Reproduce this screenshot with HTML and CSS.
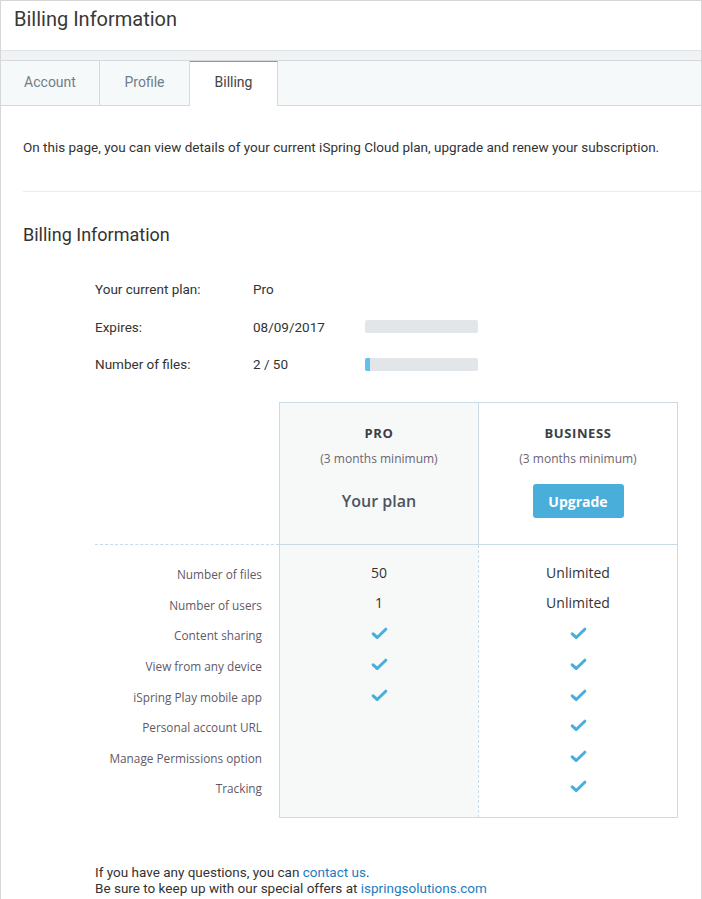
FILE: index.html
```html
<!DOCTYPE html>
<html lang="en">
<head>
<meta charset="utf-8">
<title>Billing Information</title>
<link rel="stylesheet" href="styles.css">
</head>
<body>
<div class="frame">
  <header class="page-head">
    <h1 class="page-title">Billing Information</h1>
  </header>
  <div class="band"></div>
  <nav class="tabs">
    <a class="tab tab-account">Account</a>
    <a class="tab tab-profile">Profile</a>
    <a class="tab tab-billing active">Billing</a>
  </nav>
  <main class="content">
    <p class="intro">On this page, you can view details of your current iSpring Cloud plan, upgrade and renew your subscription.</p>
    <hr class="sep">
    <h2 class="section-title">Billing Information</h2>
    <div class="info">
      <div class="info-row">
        <span class="info-label">Your current plan:</span>
        <span class="info-value">Pro</span>
      </div>
      <div class="info-row">
        <span class="info-label">Expires:</span>
        <span class="info-value">08/09/2017</span>
        <span class="bar"></span>
      </div>
      <div class="info-row">
        <span class="info-label">Number of files:</span>
        <span class="info-value">2 / 50</span>
        <span class="bar"><span class="bar-fill" style="width:4%"></span></span>
      </div>
    </div>

    <div class="plans">
      <div class="head-spacer"></div>
      <div class="plan-head pro">
        <div class="plan-name">PRO</div>
        <div class="plan-min">(3 months minimum)</div>
        <div class="plan-action"><span class="your-plan">Your plan</span></div>
      </div>
      <div class="plan-head business">
        <div class="plan-name">BUSINESS</div>
        <div class="plan-min">(3 months minimum)</div>
        <div class="plan-action"><button class="upgrade">Upgrade</button></div>
      </div>

      <div class="col labels">
        <div class="cell">Number of files</div>
        <div class="cell">Number of users</div>
        <div class="cell">Content sharing</div>
        <div class="cell">View from any device</div>
        <div class="cell">iSpring Play mobile app</div>
        <div class="cell">Personal account URL</div>
        <div class="cell">Manage Permissions option</div>
        <div class="cell">Tracking</div>
      </div>
      <div class="col vals pro">
        <div class="cell num">50</div>
        <div class="cell num">1</div>
        <div class="cell"><svg class="check" viewBox="0 0 18 14"><path d="M2.2 7.4 L6.6 11.3 L15.8 2.4"/></svg></div>
        <div class="cell"><svg class="check" viewBox="0 0 18 14"><path d="M2.2 7.4 L6.6 11.3 L15.8 2.4"/></svg></div>
        <div class="cell"><svg class="check" viewBox="0 0 18 14"><path d="M2.2 7.4 L6.6 11.3 L15.8 2.4"/></svg></div>
        <div class="cell"></div>
        <div class="cell"></div>
        <div class="cell"></div>
      </div>
      <div class="col vals business">
        <div class="cell num">Unlimited</div>
        <div class="cell num">Unlimited</div>
        <div class="cell"><svg class="check" viewBox="0 0 18 14"><path d="M2.2 7.4 L6.6 11.3 L15.8 2.4"/></svg></div>
        <div class="cell"><svg class="check" viewBox="0 0 18 14"><path d="M2.2 7.4 L6.6 11.3 L15.8 2.4"/></svg></div>
        <div class="cell"><svg class="check" viewBox="0 0 18 14"><path d="M2.2 7.4 L6.6 11.3 L15.8 2.4"/></svg></div>
        <div class="cell"><svg class="check" viewBox="0 0 18 14"><path d="M2.2 7.4 L6.6 11.3 L15.8 2.4"/></svg></div>
        <div class="cell"><svg class="check" viewBox="0 0 18 14"><path d="M2.2 7.4 L6.6 11.3 L15.8 2.4"/></svg></div>
        <div class="cell"><svg class="check" viewBox="0 0 18 14"><path d="M2.2 7.4 L6.6 11.3 L15.8 2.4"/></svg></div>
      </div>
    </div>

    <p class="footer-note">If you have any questions, you can <a class="link">contact us</a>.<br>Be sure to keep up with our special offers at <a class="link">ispringsolutions.com</a></p>
  </main>
</div>
</body>
</html>
```
FILE: styles.css
```css
* { box-sizing: border-box; }
html, body { margin: 0; padding: 0; background: #fff; }
body {
  font-family: Roboto, "Liberation Sans", Arial, sans-serif;
  color: #333;
}
.frame {
  width: 702px;
  min-height: 899px;
  border: 1px solid #d6d6d6;
  border-bottom: none;
}
.page-head {
  height: 50px;
  padding: 6px 0 0 13px;
  border-bottom: 1px solid #e1e3e5;
}
.page-title {
  margin: 0;
  font-size: 20px;
  line-height: 24px;
  font-weight: 400;
  color: #383838;
}
.band {
  height: 10px;
  background: #f0f3f5;
  border-bottom: 1px solid #d6d9dc;
}
.tabs {
  display: flex;
  height: 45px;
  background: #f6f9fa;
  border-bottom: 1px solid #d6d9dc;
}
.tab {
  display: flex;
  align-items: center;
  justify-content: center;
  font-size: 14px;
  color: #707d8a;
  border-right: 1px solid #d6d9dc;
  padding-bottom: 3px;
}
.tab-account { width: 99px; }
.tab-profile { width: 90px; }
.tab-billing { width: 88px; }
.tab.active {
  background: #fff;
  color: #444;
  border-top: 1px solid #4aaedb;
  padding-bottom: 4px;
  margin-bottom: -1px;
  height: 45px;
}
.content {
  padding-left: 22px;
}
.intro {
  margin: 0;
  padding-top: 32px;
  font-size: 13.5px;
  line-height: 18px;
  color: #333;
}
.sep {
  margin: 35px 0 0 0;
  border: none;
  border-top: 1px solid #e9ebed;
  height: 0;
}
.section-title {
  margin: 32px 0 0 0;
  font-size: 18px;
  line-height: 22px;
  font-weight: 400;
  color: #333;
}
.info {
  margin: 34px 0 0 72px;
  display: flex;
  flex-direction: column;
  gap: 19.5px;
}
.info-row {
  display: flex;
  align-items: center;
  height: 18px;
  font-size: 13.5px;
  color: #333;
}
.info-label { width: 158px; }
.info-value { width: 112px; }
.bar {
  width: 113px;
  height: 13px;
  background: #e3e6e9;
  border-radius: 2px;
  overflow: hidden;
  display: flex;
}
.bar-fill {
  height: 100%;
  background: #62c0ec;
}

/* plans table */
.plans {
  margin: 29px 0 0 72px;
  display: grid;
  grid-template-columns: 184px 199px 200px;
  font-family: "Open Sans", "Noto Sans", sans-serif;
}
.head-spacer {
  border-bottom: 1px dashed #c8dbe7;
}
.plan-head {
  height: 143px;
  border-top: 1px solid #c8dbe7;
  border-bottom: 1px solid #c8dbe7;
  text-align: center;
  padding-top: 21px;
}
.plan-head.pro {
  background: #f7f9f9;
  border-left: 1px solid #c8dbe7;
}
.plan-head.business {
  border-left: 1px solid #c8dbe7;
  border-right: 1px solid #c8dbe7;
}
.plan-name {
  font-size: 13px;
  line-height: 18px;
  font-weight: 700;
  color: #3a3f47;
  letter-spacing: 0.6px;
}
.plan-min {
  margin-top: 9px;
  font-size: 12px;
  line-height: 16px;
  color: #6c6470;
}
.plan-action {
  margin-top: 17px;
  height: 34px;
  display: flex;
  align-items: center;
  justify-content: center;
}
.your-plan {
  font-size: 16px;
  font-weight: 600;
  color: #4d5560;
}
.upgrade {
  width: 91px;
  height: 34px;
  border: none;
  border-radius: 3px;
  background: #4aaedb;
  color: #fff;
  font-family: "Open Sans", "Noto Sans", sans-serif;
  font-size: 14px;
  font-weight: 700;
  padding: 0;
}
.col {
  display: flex;
  flex-direction: column;
  padding: 14px 0 13px 0;
}
.cell {
  height: 30.6px;
  display: flex;
  align-items: center;
  justify-content: center;
}
.labels .cell {
  justify-content: flex-end;
  padding-right: 17px;
  font-size: 11.8px;
  color: #5f5a66;
}
.vals.pro {
  background: #f7f9f9;
  border-left: 1px solid #c8dbe7;
  border-bottom: 1px solid #c8dbe7;
}
.vals.business {
  border-left: 1px dashed #c8dbe7;
  border-right: 1px solid #c8dbe7;
  border-bottom: 1px solid #c8dbe7;
}
.num {
  font-size: 14px;
  color: #333;
  padding-bottom: 4px;
}
.check {
  width: 17px;
  height: 13px;
  margin-top: -3px;
}
.check path {
  fill: none;
  stroke: #4aaedb;
  stroke-width: 3.3;
  stroke-linecap: round;
  stroke-linejoin: round;
}
.footer-note {
  margin: 46px 0 0 72px;
  font-size: 13.5px;
  line-height: 16px;
  color: #333;
}
.link {
  color: #1f7bc1;
  text-decoration: none;
}
```
